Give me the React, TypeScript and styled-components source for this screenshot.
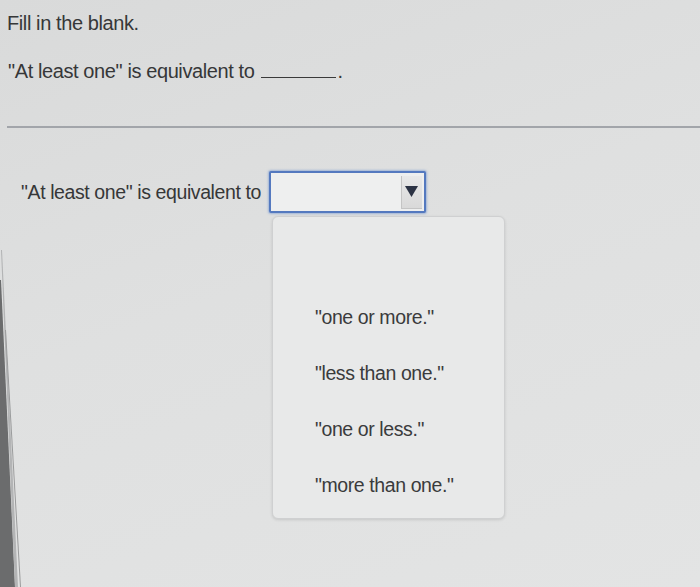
import React from "react";
import styled, { createGlobalStyle } from "styled-components";

const Global = createGlobalStyle`
  html, body { margin: 0; padding: 0; }
  body {
    width: 700px;
    height: 587px;
    overflow: hidden;
    font-family: "Liberation Sans", Arial, sans-serif;
  }
`;

const Page = styled.div`
  position: relative;
  width: 700px;
  height: 587px;
  box-sizing: border-box;
  padding: 12px 0 0 7px;
  display: flex;
  flex-direction: column;
  overflow: hidden;
  color: #363738;
  background: linear-gradient(160deg, #d9dada 0%, #dfe0e0 45%, #e3e4e4 100%);
`;

const Line = styled.div<{ $top?: number; $indent?: number; $size?: number }>`
  font-size: ${(p) => p.$size ?? 20}px;
  line-height: 22px;
  margin-top: ${(p) => p.$top ?? 0}px;
  margin-left: ${(p) => p.$indent ?? 0}px;
  letter-spacing: -0.4px;
  white-space: nowrap;
`;

const Blank = styled.span`
  display: inline-block;
  width: 75px;
  margin-left: 7px;
  margin-right: 1px;
  border-bottom: 1px solid #3a3a3a;
  height: 17px;
  vertical-align: baseline;
`;

const Rule = styled.hr`
  margin: 44px 0 0 0;
  border: 0;
  height: 2px;
  background: #a2a5aa;
`;

const AnswerRow = styled.div`
  display: flex;
  align-items: center;
  margin: 43px 0 0 14px;
`;

const SelectWrap = styled.div`
  position: relative;
  margin-left: 8px;
`;

const SelectBox = styled.div`
  box-sizing: border-box;
  width: 157px;
  height: 42px;
  border: 2px solid #5479bf;
  border-radius: 2px;
  box-shadow: 0 0 2px 1px rgba(110, 145, 210, 0.55);
  background: #eeefef;
  display: flex;
  justify-content: flex-end;
  align-items: center;
  padding-right: 2px;
`;

const ArrowButton = styled.div`
  box-sizing: border-box;
  width: 21px;
  height: 33px;
  background: linear-gradient(#e9e9e9, #d9d9d9);
  border-left: 1px solid #c4c4c4;
  border-bottom: 1px solid #c4c4c4;
  display: flex;
  align-items: center;
  justify-content: center;
`;

const ListBox = styled.ul`
  position: absolute;
  left: 3px;
  top: 45px;
  box-sizing: border-box;
  width: 233px;
  height: 303px;
  margin: 0;
  padding: 72px 0 0 42px;
  list-style: none;
  background: #e8e9e9;
  border: 1px solid #cfd0d1;
  border-radius: 6px;
  box-shadow: 0 1px 3px rgba(0, 0, 0, 0.12);
`;

const Option = styled.li`
  font-size: 19.5px;
  line-height: 56px;
  height: 56px;
  color: #3a3b3c;
  white-space: nowrap;
  letter-spacing: -0.4px;
`;

const Bezel = styled.svg`
  position: absolute;
  left: 0;
  top: 0;
  pointer-events: none;
`;

const options = [
  '"one or more."',
  '"less than one."',
  '"one or less."',
  '"more than one."',
];

export default function App() {
  return (
    <>
      <Global />
      <Page>
        <Line>Fill in the blank.</Line>
        <Line $top={26} $indent={1}>
          "At least one" is equivalent to<Blank />.
        </Line>
        <Rule />
        <AnswerRow>
          <Line $size={19.5}>"At least one" is equivalent to</Line>
          <SelectWrap>
            <SelectBox>
              <ArrowButton>
                <svg width="13" height="11" viewBox="0 0 13 11">
                  <path d="M0 0 H13 L6.5 11 Z" fill="#2c3344" />
                </svg>
              </ArrowButton>
            </SelectBox>
            <ListBox>
              {options.map((o) => (
                <Option key={o}>{o}</Option>
              ))}
            </ListBox>
          </SelectWrap>
        </AnswerRow>
        <Bezel width="30" height="587" viewBox="0 0 30 587">
          <path d="M0 280 L1 280 L15 587 L0 587 Z" fill="#6b6c6d" />
          <path d="M1 250 L2 250 L18 587 L15 587 Z" fill="#b3b4b5" />
          <path d="M5 330 L6 330 L21 587 L20 587 Z" fill="#9a9b9c" />
        </Bezel>
      </Page>
    </>
  );
}
